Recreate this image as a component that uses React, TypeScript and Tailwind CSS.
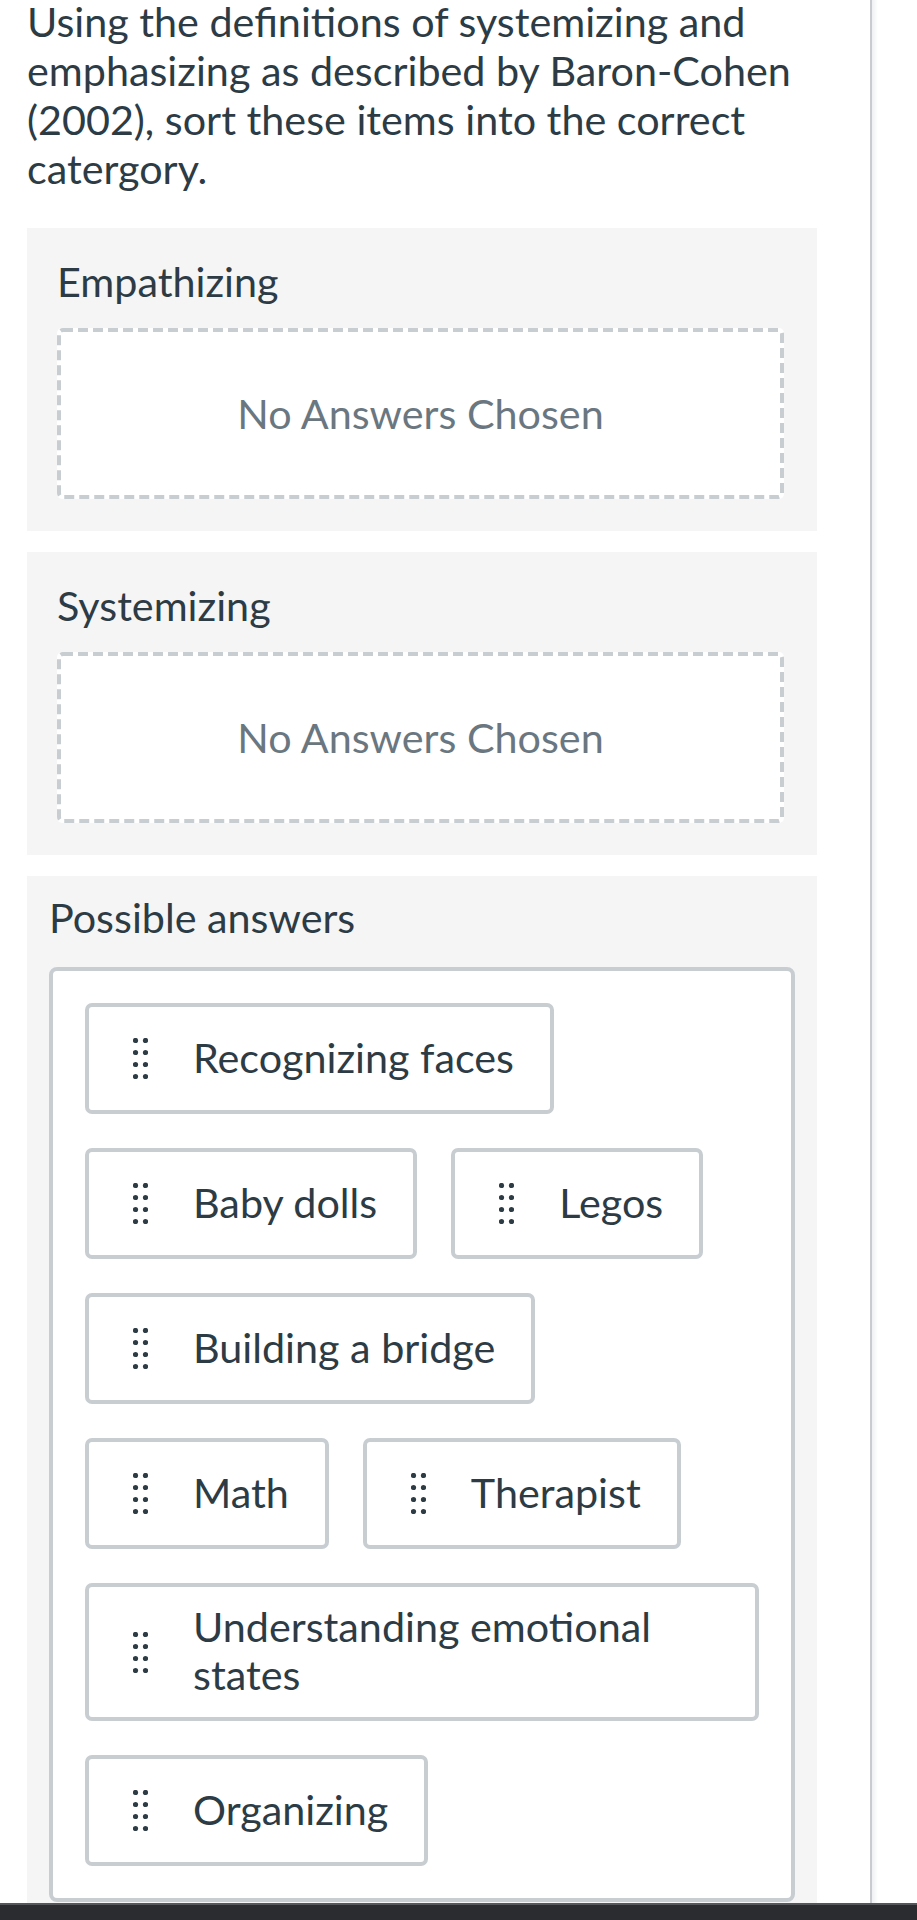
import React from "react";

const Dots = () => (
  <svg width="15" height="41" viewBox="0 0 15 41" className="shrink-0" aria-hidden="true">
    {[2.5, 14.5, 26.5, 38.5].map((y) =>
      [2.5, 12.5].map((x) => <circle key={`${x}-${y}`} cx={x} cy={y} r="2.6" fill="#2d3b45" />)
    )}
  </svg>
);

const Item = ({ label }: { label: string }) => (
  <div className="flex items-center min-h-[111px] max-w-full border-4 border-[#c7cdd1] rounded-[7px] bg-white pl-[44px] pr-[36px] py-[17px]">
    <Dots />
    <span className="ml-[45px] text-[41.3px] leading-[48px] text-[#2d3b45] -translate-y-[2px]">{label}</span>
  </div>
);

const DropZone = () => (
  <div className="relative h-[171px] flex items-center justify-center bg-white rounded-[5px]">
    <svg className="absolute inset-0 w-full h-full" aria-hidden="true">
      <rect
        x="2"
        y="2"
        width="calc(100% - 4px)"
        height="calc(100% - 4px)"
        rx="4"
        fill="none"
        stroke="#c7cdd1"
        strokeWidth="4"
        strokeDasharray="10 5"
      />
    </svg>
    <span className="relative text-[41.3px] leading-[49px] text-[#6b7780]">No Answers Chosen</span>
  </div>
);

const Category = ({ title }: { title: string }) => (
  <div className="bg-[#f5f5f5] pt-[29px] pb-[32px] pl-[30px] pr-[33px]">
    <div className="text-[41.3px] leading-[49px] text-[#2d3b45] mb-[22px]">{title}</div>
    <DropZone />
  </div>
);

export default function App() {
  const items = [
    "Recognizing faces",
    "Baby dolls",
    "Legos",
    "Building a bridge",
    "Math",
    "Therapist",
    "Understanding emotional states",
    "Organizing",
  ];
  return (
    <div className="w-[917px] h-[1920px] bg-white flex flex-col overflow-hidden font-['Lato',sans-serif]">
      <div className="flex flex-1 min-h-0">
        <div className="w-[872px] shrink-0 border-r-2 border-[#c8ccd0] pl-[27px] pr-[53px] overflow-hidden">
          <div className="mt-[-3.5px] text-[41.3px] leading-[49px] text-[#2d3b45]">
            Using the definitions of systemizing and emphasizing as described by Baron-Cohen (2002), sort these
            items into the correct catergory.
          </div>
          <div className="mt-[35.5px] flex flex-col gap-[21px]">
            <Category title="Empathizing" />
            <Category title="Systemizing" />
            <div className="bg-[#f5f5f5] pt-[17px] pb-[32px] px-[22px]">
              <div className="text-[41.3px] leading-[49px] text-[#2d3b45] mb-[25px]">Possible answers</div>
              <div className="border-4 border-[#c7cdd1] rounded-[8px] bg-white p-[32px] flex flex-wrap gap-[34px]">
                {items.map((it) => (
                  <Item key={it} label={it} />
                ))}
              </div>
            </div>
          </div>
        </div>
        <div className="flex-1 bg-gradient-to-r from-[#eef0f2] to-white to-[6px]"></div>
      </div>
      <div className="h-[17px] shrink-0 bg-[#2b2c30] border-t-2 border-[#56575b]"></div>
    </div>
  );
}
